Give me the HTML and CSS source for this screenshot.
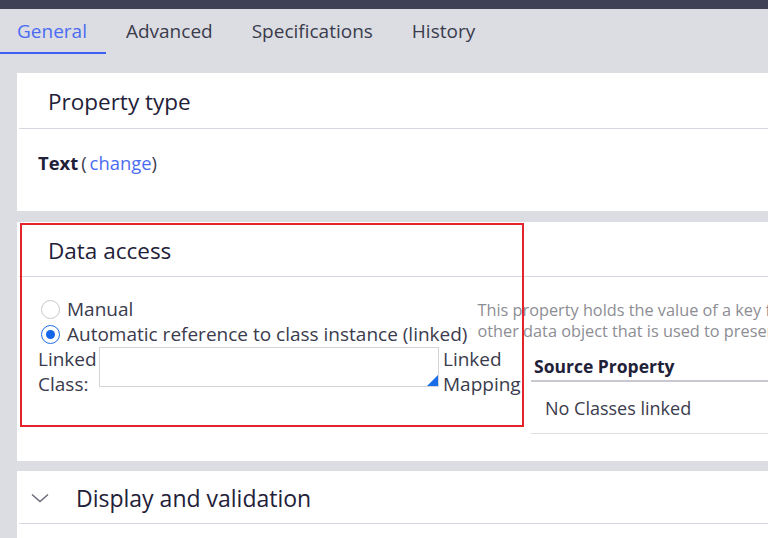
FILE: index.html
```html
<!DOCTYPE html>
<html lang="en">
<head>
<meta charset="utf-8">
<title>Property</title>
<link rel="stylesheet" href="styles.css">
</head>
<body>
<div class="topbar"></div>
<nav class="tabs">
  <a class="tab active">General</a>
  <a class="tab">Advanced</a>
  <a class="tab">Specifications</a>
  <a class="tab">History</a>
</nav>
<main class="main">
  <section class="card">
    <h2 class="card-head">Property type</h2>
    <div class="type-body"><b class="type-name">Text</b><span class="paren">(</span><a class="link">change</a><span class="paren">)</span></div>
  </section>

  <section class="card card-data">
    <h2 class="card-head">Data access</h2>
    <div class="data-body">
      <div class="row-top">
        <div class="radios">
          <label class="radio"><span class="dot"></span>Manual</label>
          <label class="radio"><span class="dot on"></span>Automatic reference to class instance (linked)</label>
        </div>
        <div class="help">
          <span class="help-line">This property holds the value of a key field in an</span>
          <span class="help-line">other data object that is used to present information</span>
        </div>
      </div>
      <div class="row-linked">
        <div class="lbl lbl-class">Linked Class:</div>
        <div class="input"><span class="corner"></span></div>
        <div class="lbl lbl-map">Linked Mapping</div>
        <div class="map-table">
          <div class="th">Source Property</div>
          <div class="td">No Classes linked</div>
        </div>
      </div>
    </div>
    <div class="highlight"></div>
  </section>

  <section class="card card-last">
    <h2 class="card-head collapse">
      <svg class="chev" width="18" height="10" viewBox="0 0 18 10"><path d="M1 1.5 L9 8.5 L17 1.5" fill="none" stroke="#6b6c7a" stroke-width="1.5"/></svg>
      Display and validation
    </h2>
  </section>
</main>
</body>
</html>
```

FILE: styles.css
```css
html, body {
  margin: 0;
  padding: 0;
}
body {
  background: #dcdde2;
  font-family: "Open Sans", "Noto Sans", sans-serif;
  color: #1f2139;
  overflow: hidden;
  width: 768px;
  height: 538px;
}
.topbar {
  height: 9px;
  background: #3f4056;
}
.tabs {
  display: flex;
  height: 45px;
}
.tab {
  display: block;
  padding: 1px 19px 0 17px;
  margin-right: 3px;
  font-size: 19px;
  line-height: 42px;
  color: #3a3b4d;
  border-bottom: 2px solid transparent;
}
.tab.active {
  color: #4a6cf2;
  border-bottom-color: #3c5ef4;
}
.main {
  padding: 19px 0 0 17px;
}
.card {
  background: #fff;
  margin-right: -60px;
  margin-bottom: 11px;
}
.card-head {
  margin: 0 0 0 2px;
  height: 56px;
  box-sizing: border-box;
  padding: 3px 0 0 29px;
  line-height: 52px;
  font-size: 22.5px;
  font-weight: 400;
  color: #1f2139;
  border-bottom: 1px solid #d6d7df;
}
.type-body {
  height: 82px;
  box-sizing: border-box;
  padding: 22px 0 0 21px;
  line-height: 24px;
  font-size: 18.4px;
}
.type-name {
  font-weight: 700;
  color: #1f2139;
}
.paren {
  color: #3a3b4d;
  margin-left: 3px;
}
.paren:last-child {
  margin-left: 0;
}
.link {
  color: #4a6cf2;
  margin-left: 3px;
}
.card-data {
  position: relative;
  margin-bottom: 10px;
}
.card-data .card-head {
  height: 55px;
  padding-top: 3px;
  line-height: 51px;
}
.data-body {
  padding: 20px 0 27px 21px;
  font-size: 19px;
  color: #3a3b4d;
}
.row-top {
  display: flex;
  align-items: flex-start;
}
.radios {
  display: flex;
  flex-direction: column;
}
.radio {
  display: flex;
  align-items: center;
  line-height: 25px;
  white-space: nowrap;
}
.dot {
  width: 19px;
  height: 19px;
  box-sizing: border-box;
  border: 1px solid #c9c9cd;
  border-radius: 50%;
  margin: 0 7px 0 3px;
  position: relative;
  background: #fff;
}
.dot.on {
  border: 1.5px solid #1d6fe8;
}
.dot.on::after {
  content: "";
  position: absolute;
  left: 3.5px;
  top: 3.5px;
  width: 9px;
  height: 9px;
  border-radius: 50%;
  background: #1467e8;
}
.help {
  margin: 3px 0 0 10px;
  font-size: 16.3px;
  line-height: 21px;
  color: #8d8d94;
  white-space: nowrap;
}
.help-line {
  display: block;
}
.row-linked {
  display: flex;
  align-items: flex-start;
}
.lbl {
  line-height: 25px;
}
.lbl-class {
  width: 60px;
}
.input {
  width: 340px;
  height: 40px;
  box-sizing: border-box;
  border: 1px solid #d3d4d8;
  margin-left: 1px;
  position: relative;
}
.corner {
  position: absolute;
  right: 0;
  bottom: 0;
  width: 0;
  height: 0;
  border-style: solid;
  border-width: 0 0 11px 11px;
  border-color: transparent transparent #1a6de8 transparent;
}
.lbl-map {
  width: 80px;
  margin-left: 4px;
}
.map-table {
  margin-left: 8px;
  flex: 1;
}
.th {
  padding: 7px 0 0 3px;
  box-sizing: border-box;
  line-height: 24px;
  font-size: 17.5px;
  font-weight: 700;
  color: #1f2139;
  border-bottom: 2px solid #c8c9ce;
  height: 35px;
}
.td {
  padding: 14px 0 13px 14px;
  line-height: 24px;
  font-size: 18px;
  color: #3a3b4d;
  border-bottom: 1px solid #dedfe3;
}
.highlight {
  position: absolute;
  left: 3px;
  top: 1px;
  width: 504px;
  height: 204px;
  box-sizing: border-box;
  border: 2px solid #e3242b;
  pointer-events: none;
}
.card-last {
  height: 80px;
}
.collapse {
  display: flex;
  align-items: center;
  padding-left: 12px;
  height: 53px;
  line-height: normal;
  padding-top: 1px;
  font-size: 23px;
}
.chev {
  margin-right: 27px;
}
```
